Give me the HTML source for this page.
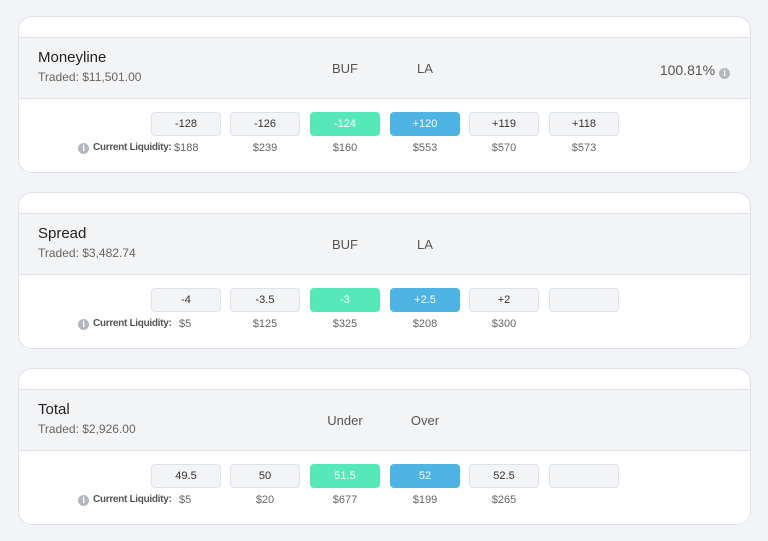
<!DOCTYPE html>
<html><head><style>
body{margin:0;background:#f3f4f6;font-family:"Liberation Sans",sans-serif;width:768px;height:541px;overflow:hidden;position:relative}
.card{position:absolute;left:18px;width:733px;height:157px;background:#fff;border:1px solid #dde2ea;border-radius:14px;overflow:hidden;box-sizing:border-box}
.hd{position:absolute;left:0;right:0;top:20px;height:60px;background:#f3f4f6;border-top:1px solid #dde2ea;border-bottom:1px solid #dde2ea}
.t{position:absolute;left:19px;top:11px;font-size:15px;color:#222}
.tr{position:absolute;left:19px;top:32px;font-size:12px;color:#666}
.col{position:absolute;top:23px;font-size:13px;color:#555;width:80px;text-align:center}
.b{position:absolute;top:95px;width:70px;height:24px;box-sizing:border-box;border:1px solid #dde2ea;background:#f3f4f6;border-radius:4px;font-size:11px;color:#333;text-align:center;line-height:22px}
.g{background:#56e8b9;border-color:#56e8b9;color:#fff}
.bl{background:#4db4e4;border-color:#4db4e4;color:#fff}
.l{position:absolute;top:125px;width:70px;text-align:center;font-size:11px;color:#666}
.cl{position:absolute;top:125px;left:59px;font-size:10px;color:#555;font-weight:bold;letter-spacing:-0.3px}
.i{display:inline-block;width:11px;height:11px;border-radius:50%;background:#b5b8bc;color:#fff;font-size:9px;line-height:11px;text-align:center;font-weight:bold;vertical-align:-1px;margin-right:4px}
.pct{position:absolute;right:20px;top:24px;font-size:14px;color:#555}
</style></head><body>

<div class="card" style="top:16px">
<div class="hd"><div class="t">Moneyline</div><div class="tr">Traded: $11,501.00</div>
<div class="col" style="left:286px">BUF</div><div class="col" style="left:366px">LA</div>
<div class="pct">100.81% <span class="i" style="margin:0">i</span></div></div>
<div class="b" style="left:132px">-128</div><div class="b" style="left:211px">-126</div><div class="b g" style="left:291px">-124</div><div class="b bl" style="left:371px">+120</div><div class="b" style="left:450px">+119</div><div class="b" style="left:530px">+118</div>
<div class="cl"><span class="i">i</span>Current Liquidity:</div>
<div class="l" style="left:155px;text-align:left;width:40px">$188</div><div class="l" style="left:211px">$239</div><div class="l" style="left:291px">$160</div><div class="l" style="left:371px">$553</div><div class="l" style="left:450px">$570</div><div class="l" style="left:530px">$573</div>
</div>

<div class="card" style="top:192px">
<div class="hd"><div class="t">Spread</div><div class="tr">Traded: $3,482.74</div>
<div class="col" style="left:286px">BUF</div><div class="col" style="left:366px">LA</div></div>
<div class="b" style="left:132px">-4</div><div class="b" style="left:211px">-3.5</div><div class="b g" style="left:291px">-3</div><div class="b bl" style="left:371px">+2.5</div><div class="b" style="left:450px">+2</div><div class="b" style="left:530px"></div>
<div class="cl"><span class="i">i</span>Current Liquidity:</div>
<div class="l" style="left:160px;text-align:left;width:40px">$5</div><div class="l" style="left:211px">$125</div><div class="l" style="left:291px">$325</div><div class="l" style="left:371px">$208</div><div class="l" style="left:450px">$300</div>
</div>

<div class="card" style="top:368px">
<div class="hd"><div class="t">Total</div><div class="tr">Traded: $2,926.00</div>
<div class="col" style="left:286px">Under</div><div class="col" style="left:366px">Over</div></div>
<div class="b" style="left:132px">49.5</div><div class="b" style="left:211px">50</div><div class="b g" style="left:291px">51.5</div><div class="b bl" style="left:371px">52</div><div class="b" style="left:450px">52.5</div><div class="b" style="left:530px"></div>
<div class="cl"><span class="i">i</span>Current Liquidity:</div>
<div class="l" style="left:160px;text-align:left;width:40px">$5</div><div class="l" style="left:211px">$20</div><div class="l" style="left:291px">$677</div><div class="l" style="left:371px">$199</div><div class="l" style="left:450px">$265</div>
</div>

</body></html>
